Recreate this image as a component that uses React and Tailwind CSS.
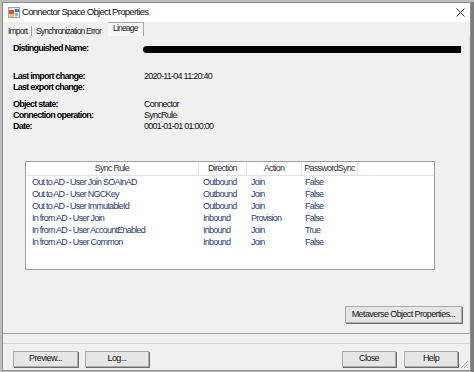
import React from 'react'

const rules = [
  ['Out to AD - User Join SOAInAD', 'Outbound', 'Join', 'False'],
  ['Out to AD - User NGCKey', 'Outbound', 'Join', 'False'],
  ['Out to AD - User ImmutableId', 'Outbound', 'Join', 'False'],
  ['In from AD - User Join', 'Inbound', 'Provision', 'False'],
  ['In from AD - User AccountEnabled', 'Inbound', 'Join', 'True'],
  ['In from AD - User Common', 'Inbound', 'Join', 'False'],
]

function Button({ label, className }) {
  return (
    <div
      className={`flex h-[16px] items-center justify-center border border-[#ababab] bg-[#e6e6e6] text-[9px] tracking-[-0.6px] text-[#111] shadow-[1px_1px_0_0_#6e6e6e] ${className}`}
    >
      {label}
    </div>
  )
}

function Field({ label, value }) {
  return (
    <div className="flex h-[11px] items-center leading-[11px]">
      <div className="ml-[10px] w-[131px] font-bold text-black">{label}</div>
      <div className="text-[#111]">{value}</div>
    </div>
  )
}

export default function App() {
  return (
    <div className="flex h-[372px] w-[474px] overflow-hidden bg-[#bdbdbd] pl-[2px] pt-[2px] font-['Liberation_Sans',Arial,sans-serif] text-[9px] tracking-[-0.75px]">
      {/* dialog window */}
      <div className="relative flex h-[369px] w-[469px] shrink-0 flex-col border border-[#8c8c8c] bg-[#f0f0f0]">
        {/* title bar */}
        <div className="flex h-[19px] items-center bg-white">
          <svg className="ml-[5px]" width="12" height="11" viewBox="0 0 12 11">
            <rect x="0.5" y="0.5" width="11" height="10" fill="#e4ebf4" stroke="#8aa6c8" />
            <rect x="1" y="3" width="5" height="4" fill="#e2542e" />
            <rect x="2" y="7" width="4" height="3" fill="#f2c33a" />
            <rect x="7" y="2" width="4" height="3" fill="#4d80cf" />
            <rect x="7" y="6" width="3" height="3" fill="#9bb7dd" />
          </svg>
          <div className="ml-[2px] text-[9.5px] tracking-[-0.7px] text-[#111]">Connector Space Object Properties</div>
          <svg className="ml-auto mr-[5px]" width="9" height="9" viewBox="0 0 9 9">
            <path d="M0.5 0.5 L8.5 8.5 M8.5 0.5 L0.5 8.5" stroke="#333" strokeWidth="1" />
          </svg>
        </div>

        {/* tabs */}
        <div className="flex h-[14px] items-end text-[8.5px] tracking-[-0.8px] text-[#222]">
          <div className="flex h-[10px] w-[29px] items-center border-r border-[#9d9d9d] pl-[5px]">Import</div>
          <div className="flex h-[10px] w-[76px] items-center pl-[4px]">Synchronization Error</div>
          <div className="flex h-[14px] w-[36px] items-center border-r border-t border-[#a6a6a6] bg-[#f8f8f8] pb-[2px] pl-[5px]">
            Lineage
          </div>
        </div>

        {/* tab panel */}
        <div className="flex h-[298px] flex-col border-b border-r border-[#a3a3a3] border-r-[#dcdcdc] pt-[7px]">
          <div className="flex h-[11px] items-center leading-[11px]">
            <div className="ml-[10px] w-[130px] font-bold text-black">Distinguished Name:</div>
            <div className="mt-[1px] h-[7px] w-[318px] rounded-l-full bg-black" />
          </div>

          <div className="mt-[17px]">
            <Field label="Last import change:" value="2020-11-04 11:20:40" />
            <Field label="Last export change:" value="" />
          </div>

          <div className="mt-[6px]">
            <Field label="Object state:" value="Connector" />
            <Field label="Connection operation:" value="SyncRule" />
            <Field label="Date:" value="0001-01-01 01:00:00" />
          </div>

          {/* sync rules list */}
          <div className="ml-[22px] mt-[29px] h-[109px] w-[410px] border border-[#9e9e9e] bg-white">
            <div className="flex h-[14px] items-center border-b border-[#e3e3e3] text-[#333]">
              <div className="flex h-full w-[173px] items-center justify-center border-r border-[#e5e5e5]">Sync Rule</div>
              <div className="flex h-full w-[48px] items-center justify-center border-r border-[#e5e5e5]">Direction</div>
              <div className="flex h-full w-[55px] items-center justify-center border-r border-[#e5e5e5]">Action</div>
              <div className="flex h-full w-[56px] items-center justify-center border-r border-[#e5e5e5]">PasswordSync</div>
            </div>
            {rules.map(([name, dir, action, pw]) => (
              <div key={name} className="flex h-[12px] items-center leading-[12px] text-[#2d3a7c]">
                <div className="w-[173px] pl-[6px]">{name}</div>
                <div className="w-[48px] pl-[4px]">{dir}</div>
                <div className="w-[55px] pl-[4px]">{action}</div>
                <div className="w-[56px] pl-[3px]">{pw}</div>
              </div>
            ))}
          </div>

          <Button label="Metaverse Object Properties..." className="ml-[342px] mt-[36px] h-[17px] w-[117px]" />
        </div>

        {/* separator */}
        <div className="h-[10px] border-b border-[#d6d6d6]" />

        {/* bottom buttons */}
        <div className="flex pt-[7px]">
          <Button label="Preview..." className="ml-[10px] w-[65px]" />
          <Button label="Log..." className="ml-[7px] w-[64px]" />
          <Button label="Close" className="ml-auto w-[54px]" />
          <Button label="Help" className="ml-[8px] mr-[12px] w-[54px]" />
        </div>

        {/* resize grip */}
        <svg className="absolute bottom-[1px] right-[1px]" width="9" height="9" viewBox="0 0 9 9">
          <path d="M8 1 L1 8 M8 4 L4 8 M8 7 L7 8" stroke="#9a9a9a" strokeWidth="1" />
        </svg>
      </div>
      <div className="flex-1 self-stretch bg-[#7b7b7b]" />
    </div>
  )
}
